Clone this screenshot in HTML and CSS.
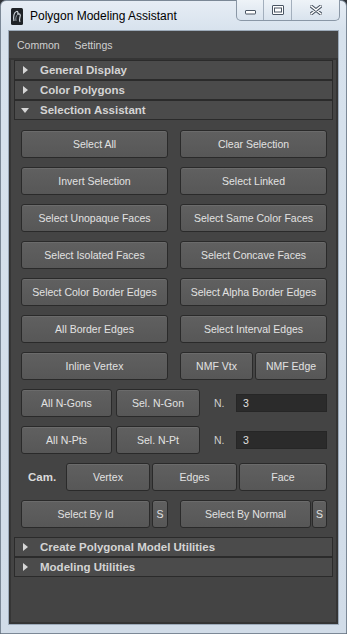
FILE: index.html
```html
<!DOCTYPE html>
<html>
<head>
<title>Polygon Modeling Assistant</title>
<link rel="stylesheet" href="styles.css">
</head>
<body>
<div class="window">
  <div class="titlebar">
    <svg class="appicon" width="12" height="17" viewBox="0 0 12 17">
      <rect x="0" y="0" width="12" height="17" rx="1.5" fill="#1e2226"/>
      <path d="M3 13 C2 9 3 4 5.5 3.5 C7 3.2 7.5 5 6.5 6.5 C8.5 5 10 6.5 9 9 C8.5 11 8 12.5 9 14" fill="none" stroke="#c9d0d6" stroke-width="1.2"/>
      <path d="M5 13 C4.5 10 5 8 6.5 6.5" fill="none" stroke="#8d969e" stroke-width="1"/>
    </svg>
    <span class="title">Polygon Modeling Assistant</span>
    <div class="caption">
      <div class="cbtn min">
        <svg width="11" height="5" viewBox="0 0 11 5"><rect x="0.5" y="0.5" width="10" height="3.5" rx="0.5" fill="#fff" stroke="#4a5563"/></svg>
      </div>
      <div class="cbtn max">
        <svg width="12" height="10" viewBox="0 0 12 10"><rect x="0.5" y="0.5" width="11" height="9" rx="0.5" fill="#fff" stroke="#4a5563"/><rect x="2.5" y="3" width="7" height="4" fill="none" stroke="#4a5563"/></svg>
      </div>
      <div class="cbtn close">
        <svg width="12" height="10" viewBox="0 0 12 10"><path d="M1 1 L11 9 M11 1 L1 9" stroke="#4a5563" stroke-width="3.4" stroke-linecap="round"/><path d="M1 1 L11 9 M11 1 L1 9" stroke="#fff" stroke-width="1.6" stroke-linecap="round"/></svg>
      </div>
    </div>
  </div>

  <div class="client">
    <div class="menubar">
      <span>Common</span>
      <span>Settings</span>
    </div>

    <div class="panel">
      <div class="frame">
        <div class="head">General Display</div>
      </div>
      <div class="frame">
        <div class="head">Color Polygons</div>
      </div>
      <div class="frame open">
        <div class="head">Selection Assistant</div>
        <div class="sect">
          <div class="row two">
            <button class="btn">Select All</button>
            <button class="btn">Clear Selection</button>
          </div>
          <div class="row two">
            <button class="btn">Invert Selection</button>
            <button class="btn">Select Linked</button>
          </div>
          <div class="row two">
            <button class="btn">Select Unopaque Faces</button>
            <button class="btn">Select Same Color Faces</button>
          </div>
          <div class="row two">
            <button class="btn">Select Isolated Faces</button>
            <button class="btn">Select Concave Faces</button>
          </div>
          <div class="row two">
            <button class="btn">Select Color Border Edges</button>
            <button class="btn">Select Alpha Border Edges</button>
          </div>
          <div class="row two">
            <button class="btn">All Border Edges</button>
            <button class="btn">Select Interval Edges</button>
          </div>
          <div class="row two">
            <button class="btn">Inline Vertex</button>
            <div class="pair">
              <button class="btn w73">NMF Vtx</button>
              <button class="btn w72">NMF Edge</button>
            </div>
          </div>
          <div class="row ngon">
            <button class="btn w91">All N-Gons</button>
            <button class="btn w84">Sel. N-Gon</button>
            <span class="lbl">N.</span>
            <div class="field">3</div>
          </div>
          <div class="row ngon">
            <button class="btn w91">All N-Pts</button>
            <button class="btn w84">Sel. N-Pt</button>
            <span class="lbl">N.</span>
            <div class="field">3</div>
          </div>
          <div class="row cam">
            <span class="cam-lbl">Cam.</span>
            <button class="btn w84">Vertex</button>
            <button class="btn w85">Edges</button>
            <button class="btn w88">Face</button>
          </div>
          <div class="row two">
            <div class="pair">
              <button class="btn w129">Select By Id</button>
              <button class="btn w16">S</button>
            </div>
            <div class="pair tight">
              <button class="btn w131">Select By Normal</button>
              <button class="btn w15">S</button>
            </div>
          </div>
        </div>
      </div>
      <div class="frame">
        <div class="head">Create Polygonal Model Utilities</div>
      </div>
      <div class="frame">
        <div class="head">Modeling Utilities</div>
      </div>
    </div>
  </div>
</div>
</body>
</html>
```

FILE: styles.css
```css
body { margin:0; background:#30343a; font-family:"Liberation Sans",Arial,sans-serif; }

/* window frame */
.window { box-sizing:border-box; width:347px; height:634px; display:flex; flex-direction:column;
          border:1px solid #7b8896; border-radius:6px 6px 0 0; padding:0 7px 8px 7px;
          background:linear-gradient(#e6edf5, #d7e2ed 30px, #d1dce8); }
.titlebar { height:29px; display:flex; align-items:center; flex-shrink:0; }
.appicon { margin-left:3px; margin-top:2px; }
.title { margin-left:7px; font-size:12px; color:#000; }
.caption { margin-left:auto; margin-right:-1px; margin-top:-1px; align-self:flex-start;
           display:flex; height:21px; border:1px solid #8a97a6; border-top:none;
           border-radius:0 0 5px 5px; overflow:hidden; box-sizing:border-box;
           background:linear-gradient(#eef3f8, #d9e3ee); }
.cbtn { display:flex; align-items:center; justify-content:center; }
.cbtn.min { width:27px; border-right:1px solid #a3afbd; padding-top:5px; box-sizing:border-box; }
.cbtn.max { width:27px; border-right:1px solid #a3afbd; }
.cbtn.close { width:47px; }

/* client area */
.client { flex:1; display:flex; flex-direction:column; border:1px solid #9dabba; background:#444; }
.menubar { height:27px; display:flex; align-items:center; gap:15px; padding-left:8px;
           font-size:10.5px; color:#d0d0d0; flex-shrink:0; }
.panel { flex:1; border:2px solid #353535; padding:0 3px; background:#444; }

.head { height:18px; border:1px solid #2b2b2b; background:#4b4b4b; display:flex; align-items:center;
        padding-left:8px; font-size:11.5px; font-weight:bold; color:#d4d4d4; }
.head::before { content:""; width:0; height:0; border-left:5px solid #d6d6d6;
                border-top:4px solid transparent; border-bottom:4px solid transparent; margin-right:12px; }
.open .head::before { border-left:4px solid transparent; border-right:4px solid transparent;
                      border-top:5px solid #d6d6d6; border-bottom:none; margin-left:-2px; margin-right:11px; }

.sect { padding:10px 6px 9px 7px; display:flex; flex-direction:column; gap:9px; }
.row { height:28px; }
.row.two { display:grid; grid-template-columns:147px 147px; column-gap:12px; }
.pair { display:flex; gap:2px; }
.pair.tight { gap:1px; }
.ngon { display:flex; align-items:center; }
.cam { display:flex; gap:2px; align-items:center; }

.btn { box-sizing:border-box; height:28px; padding:0; border:1px solid #2a2a2a; border-radius:3px;
       background:linear-gradient(#606060, #575757); box-shadow:inset 0 1px 0 rgba(255,255,255,0.07);
       color:#e2e2e2; font-family:"Liberation Sans",Arial,sans-serif; font-size:10.5px; }
.w15 { width:15px; } .w16 { width:16px; } .w72 { width:72px; } .w73 { width:73px; }
.w84 { width:84px; } .w85 { width:85px; } .w88 { width:88px; } .w91 { width:91px; }
.w129 { width:129px; } .w131 { width:131px; }

.ngon .w91 { margin-right:4px; }
.lbl { margin-left:14px; width:22px; font-size:10.5px; color:#cfcfcf; }
.field { box-sizing:border-box; width:91px; height:18px; background:#2b2b2b; border:1px solid #262626;
         color:#e0e0e0; font-size:10.5px; padding-left:6px; display:flex; align-items:center; }
.cam-lbl { width:43px; padding-left:7px; box-sizing:border-box; font-size:11.5px; font-weight:bold; color:#dadada; }
```
